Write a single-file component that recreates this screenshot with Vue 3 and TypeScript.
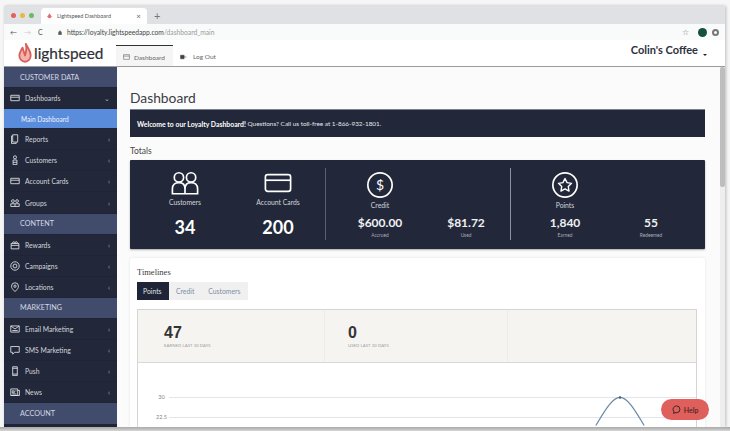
<script setup lang="ts">
type Row = { kind: 'section' | 'item' | 'active'; label: string; icon?: string; open?: boolean }
const rows: Row[] = [
  { kind: 'section', label: 'CUSTOMER DATA' },
  { kind: 'item', label: 'Dashboards', icon: 'card', open: true },
  { kind: 'active', label: 'Main Dashboard' },
  { kind: 'item', label: 'Reports', icon: 'doc' },
  { kind: 'item', label: 'Customers', icon: 'person' },
  { kind: 'item', label: 'Account Cards', icon: 'card' },
  { kind: 'item', label: 'Groups', icon: 'group' },
  { kind: 'section', label: 'CONTENT' },
  { kind: 'item', label: 'Rewards', icon: 'gift' },
  { kind: 'item', label: 'Campaigns', icon: 'target' },
  { kind: 'item', label: 'Locations', icon: 'pin' },
  { kind: 'section', label: 'MARKETING' },
  { kind: 'item', label: 'Email Marketing', icon: 'mail' },
  { kind: 'item', label: 'SMS Marketing', icon: 'chat' },
  { kind: 'item', label: 'Push', icon: 'phone' },
  { kind: 'item', label: 'News', icon: 'news' },
  { kind: 'section', label: 'ACCOUNT' },
]
const icons: Record<string, string> = {
  card: 'M1 3h11v7H1zM1 5.500h11',
  doc: 'M3.500 1h6.500v9.500H3.500zM3.500 2.500H2V12.500h6v-2',
  person: 'M4.500 3a2 2 0 1 1 4 0a2 2 0 1 1-4 0M4 6.500h5v6H4zM4 9.500h5',
  group: 'M2 4a1.800 1.800 0 1 1 3.600 0a1.800 1.800 0 1 1-3.600 0M7.400 4a1.800 1.800 0 1 1 3.600 0a1.800 1.800 0 1 1-3.600 0M1 7.500h11V11H1zM6.500 7.500V11',
  gift: 'M1.500 4.500h10v7h-10zM1.500 7h10M4 4.500c-2-3 3-3 2.500 0c-.5-3 4.500-3 2.500 0',
  target: 'M1 6.500a5.500 5.500 0 1 0 11 0a5.500 5.500 0 1 0-11 0M4 6.500a2.500 2.500 0 1 0 5 0a2.500 2.500 0 1 0-5 0',
  pin: 'M6.500 12.500C3 9 2 7.500 2 5.500a4.500 4.500 0 0 1 9 0c0 2-1 3.500-4.500 7zM5 5.500a1.500 1.500 0 1 0 3 0a1.500 1.500 0 1 0-3 0',
  mail: 'M1 2.500h11v8H1zM1 2.500l5.500 4l5.500-4M3 8.500h7',
  chat: 'M1 2h11v7.500H6L3.500 12V9.500H1z',
  phone: 'M3.500 1h6v11.500h-6zM3.500 3h6M3.500 10.500h6',
  news: 'M1 2.500h9v8.500H1zM10 4.500h2.500V11H1M3 5h2.500v2.500H3zM7 5h1.500M3 9h5.500',
}
</script>

<template>
  <div class="page">
    <div class="window">
      <div class="tabbar">
        <span class="dot red"></span><span class="dot yellow"></span><span class="dot green"></span>
        <div class="tab">
          <svg class="favicon" viewBox="0 0 10 12"><path d="M5 .5 9 6.500a4 4 0 0 1-8 0z" fill="#e0736f" /></svg>
          <span class="tab-title">Lightspeed Dashboard</span>
          <span class="tab-close">×</span>
        </div>
        <span class="new-tab">+</span>
      </div>
      <div class="addressbar">
        <span class="nav">←</span><span class="nav light">→</span><span class="nav">C</span>
        <svg class="lock" viewBox="0 0 8 9"><path d="M1 4h6v5H1zM2.500 4V2.500a1.500 1.500 0 0 1 3 0V4" fill="#555" stroke="#555" stroke-width=".7" /></svg>
        <span class="url">https://loyalty.lightspeedapp.com<span class="url-path">/dashboard_main</span></span>
        <span class="spacer"></span>
        <span class="star">☆</span>
        <span class="avatar"></span>
        <span class="ext"></span>
      </div>
      <div class="appheader">
        <div class="logo">
          <svg viewBox="0 0 16 24" class="flame"><path d="M9 1C10.500 5 14.800 9 14.800 15A6.800 7.500 0 0 1 1.200 15C1.200 11.500 3.500 8.500 5 5.500L8 15C9.500 11 10 6 9 1z" fill="#f2b5ae" stroke="#dd5e58" stroke-width="2.200" stroke-linejoin="round" /></svg>
          <span class="wordmark">lightspeed</span>
        </div>
        <div class="headtab current">
          <svg viewBox="0 0 12 10" class="headicon"><path d="M1 1h10v8H1zM1 3.500h10" fill="none" stroke="#666" /></svg>
          Dashboard
        </div>
        <div class="headtab">
          <svg viewBox="0 0 12 10" class="headicon"><path d="M1 2h6v6H1zM7 5h4" fill="#444" stroke="#444" /></svg>
          Log Out
        </div>
        <span class="spacer"></span>
        <div class="shop">Colin's Coffee<span class="caret"></span></div>
      </div>
      <div class="body">
        <nav class="sidebar">
          <div v-for="r in rows" :key="r.label" :class="['row', r.kind]">
            <svg v-if="r.icon" viewBox="0 0 13 13" class="navicon"><path :d="icons[r.icon]" /></svg>
            <span class="rowlabel">{{ r.label }}</span>
            <span v-if="r.kind === 'item'" class="chev">{{ r.open ? '⌄' : '‹' }}</span>
          </div>
        </nav>
        <main class="main">
          <h1>Dashboard</h1>
          <div class="welcome"><b>Welcome to our Loyalty Dashboard!</b> Questions? Call us toll-free at 1-866-932-1801.</div>
          <div class="totals-title">Totals</div>
          <section class="totals">
            <div class="group g1">
              <div class="stat first">
                <svg viewBox="0 0 30 26" class="sicon"><g fill="none" stroke="#fff" stroke-width="1.800"><circle cx="8.500" cy="6.500" r="5" /><circle cx="21.500" cy="6.500" r="5" /><path d="M1.500 24v-5.500c0-4 3-6.500 7-6.500s6.500 2.500 6.500 6.500V24zM15 18.500c0-4 2.500-6.500 6.500-6.500s7 2.500 7 6.500V24H15" /></g></svg>
                <span class="cap">Customers</span><strong>34</strong>
              </div>
              <div class="stat second">
                <svg viewBox="0 0 30 26" class="sicon"><g fill="none" stroke="#fff" stroke-width="1.800"><rect x="1.500" y="3.500" width="27" height="18" rx="2.500" /><path d="M1.500 9.500h27" /></g></svg>
                <span class="cap">Account Cards</span><strong>200</strong>
              </div>
            </div>
            <div class="group g2">
              <div class="head">
                <svg viewBox="0 0 30 30" class="cicon"><circle cx="15" cy="15" r="13" fill="none" stroke="#fff" stroke-width="1.800" /><text x="15" y="20.500" text-anchor="middle" class="dollar">$</text></svg>
                <span class="cap">Credit</span>
              </div>
              <div class="pair">
                <div class="mini"><strong>$600.00</strong><small>Accrued</small></div>
                <div class="mini"><strong>$81.72</strong><small>Used</small></div>
              </div>
            </div>
            <div class="group g3">
              <div class="head">
                <svg viewBox="0 0 30 30" class="cicon"><circle cx="15" cy="15" r="13" fill="none" stroke="#fff" stroke-width="1.800" /><path d="M15 8l2.200 4.500 4.800.7-3.500 3.400.8 4.900-4.300-2.300-4.300 2.300.8-4.900-3.500-3.400 4.800-.7z" fill="none" stroke="#fff" stroke-width="1.500" stroke-linejoin="round" /></svg>
                <span class="cap">Points</span>
              </div>
              <div class="pair">
                <div class="mini"><strong>1,840</strong><small>Earned</small></div>
                <div class="mini"><strong>55</strong><small>Redeemed</small></div>
              </div>
            </div>
          </section>
          <section class="timelines">
            <div class="tl-title">Timelines</div>
            <div class="tabs"><span class="tl-tab on">Points</span><span class="tl-tab">Credit</span><span class="tl-tab">Customers</span></div>
            <div class="chartbox">
              <div class="band">
                <div class="kpi"><b>47</b><small>EARNED LAST 30 DAYS</small></div>
                <div class="kpi"><b>0</b><small>USED LAST 30 DAYS</small></div>
                <div class="kpi"></div>
              </div>
              <div class="chart">
                <div class="tick t1"><span>30</span><i></i></div>
                <div class="tick t2"><span>22.5</span><i></i></div>
                <svg class="curve" viewBox="0 0 60 32"><path d="M5 32C14 17 22 3 30 3s16 14 25 29" fill="none" stroke="#6b8ba8" stroke-width="1.300" /><circle cx="30" cy="3" r="1.300" fill="#44617c" /></svg>
              </div>
            </div>
          </section>
          <button class="help">
            <svg viewBox="0 0 10 10" class="helpicon"><path d="M5 1a3.800 3.800 0 0 1 0 7.600H2.600L2 9.500V7.200A3.800 3.800 0 0 1 5 1z" fill="none" stroke="#3a2525" stroke-width="1.100" /></svg>
            Help
          </button>
        </main>
        <div class="scrollbar"><div class="thumb"></div></div>
      </div>
    </div>
  </div>
</template>

<style>
html, body { margin: 0; background: #f3f3f3; overflow: hidden; }
</style>

<style scoped>
.page { width: 730px; height: 431px; padding: 6px 5px 4px 4px; box-sizing: border-box; background: linear-gradient(#f6f6f6 0 427px, #a3a3a3 427px, #d8d8d8 431px); font-family: "Lato", "Liberation Sans", sans-serif; overflow: hidden; }
.window { height: 421px; display: flex; flex-direction: column; background: #fff; box-shadow: 1px 0 3px #bbb; }
.spacer { flex: 1; }
.tabbar { height: 18px; background: #dfe1e5; display: flex; align-items: center; padding-left: 7px; flex: none; }
.dot { width: 5px; height: 5px; border-radius: 50%; margin-right: 4px; }
.red { background: #e4605a; } .yellow { background: #e8b93f; } .green { background: #69bc5b; }
.tab { width: 106px; height: 16px; margin: 2px 0 0 3px; background: #fff; border-radius: 4px 4px 0 0; display: flex; align-items: center; padding: 0 6px; box-sizing: border-box; font-size: 5.500px; color: #555; }
.favicon { width: 5px; height: 6px; margin-right: 5px; }
.tab-title { flex: 1; }
.tab-close { font-size: 8px; color: #666; }
.new-tab { margin-left: 7px; font-size: 11px; color: #777; }
.addressbar { height: 16px; flex: none; display: flex; align-items: center; padding: 0 6px 0 6px; background: #f9fafa; font-size: 6px; color: #555; box-sizing: border-box; }
.nav { width: 14px; font-size: 7px; color: #555; }
.nav.light { color: #ccc; }
.lock { width: 4px; height: 5px; margin: 0 5px 0 6px; flex: none; }
.url { color: #444; font-size: 6.700px; }
.url-path { color: #999; }
.star { color: #777; font-size: 8px; margin-right: 9px; }
.avatar { width: 9px; height: 9px; border-radius: 50%; background: #14523f; margin-right: 5px; }
.ext { width: 7px; height: 7px; border-radius: 50%; border: 2px solid #777; box-sizing: border-box; }
.appheader { height: 27px; flex: none; display: flex; align-items: stretch; border-bottom: 1px solid #9c9c9c; box-sizing: border-box; background: #fff; padding-right: 18px; }
.logo { width: 112px; flex: none; display: flex; align-items: center; padding-left: 14px; box-sizing: border-box; }
.flame { width: 14px; height: 20px; margin-right: 2px; flex: none; }
.wordmark { font-size: 15.400px; font-family: "Lato", "Liberation Sans", sans-serif; color: #2f3238; -webkit-text-stroke: .2px #2f3238; }
.headtab { display: flex; align-items: center; font-size: 6.500px; color: #666; padding: 7px 0 0 7px; width: 54px; box-sizing: border-box; }
.headtab.current { background: #f5f5f5; border-top: 1px solid #333; width: 57px; margin-top: 5px; padding: 2px 0 0 7px; }
.headicon { width: 7px; height: 6px; margin-right: 4px; flex: none; }
.headtab:not(.current) .headicon { margin-right: 6px; }
.shop { font-size: 11px; font-weight: 700; color: #2d3140; padding-top: 3px; }
.caret { display: inline-block; width: 0; height: 0; border: 2px solid transparent; border-top-color: #222; margin-left: 5px; vertical-align: -4px; }
.body { flex: 1; min-height: 0; display: flex; position: relative; }
.sidebar { width: 113px; flex: none; background: #1f2537; display: flex; flex-direction: column; gap: 1px; overflow: hidden; }
.row { height: 20.100px; flex: none; display: flex; align-items: center; color: #d2d5dc; font-size: 6.800px; box-sizing: border-box; padding: 0 7px 0 6px; background: #222839; }
.row.section { background: #414c6c; padding-left: 16px; font-size: 7.200px; color: #d5d9e4; }
.row.active { height: 19px; background: #5a8cdc; padding-left: 17px; color: #eef3fc; font-size: 6.600px; }
.navicon { width: 10px; height: 10px; margin-right: 5px; fill: none; stroke: #e3e5ea; stroke-width: 1.100; flex: none; }
.rowlabel { flex: 1; white-space: nowrap; }
.chev { font-size: 7px; color: #aeb2bc; }
.main { flex: 1; min-width: 0; background: #fcfbfb; padding: 24px 15px 0 13px; position: relative; overflow: hidden; }
h1 { margin: 0; font-size: 13.800px; font-weight: 400; color: #3a3d44; line-height: 14px; height: 18px; }
.welcome { background: #222839; border-top: 1px solid #77808e; height: 28px; box-sizing: border-box; display: flex; align-items: center; white-space: pre-wrap; padding-left: 7px; color: #e4e6ea; font-size: 6.400px; }
.welcome b { color: #fff; font-size: 6.850px; }
.totals-title { font-size: 8.500px; color: #454545; margin-top: 9px; line-height: 11px; height: 14px; }
.totals { height: 89px; background: #222839; display: flex; border-radius: 1px; color: #fff; box-shadow: 0 1px 2px #aaa; }
.group { box-sizing: border-box; display: flex; flex-direction: column; margin: 8px 0 9px; padding-top: 3px; }
.g1 { width: 196px; flex: none; flex-direction: row; align-items: stretch; border-right: 1px solid #596075; }
.g2 { width: 185px; flex: none; border-right: 1px solid #8c92a1; padding-left: 11px; }
.g3 { flex: 1; padding-left: 11px; }
.head { width: 86px; display: flex; flex-direction: column; align-items: center; }
.stat { display: flex; flex-direction: column; align-items: center; }
.first { width: 110px; }
.second { width: 76px; }
.sicon { width: 28px; height: 25px; }
.cicon { width: 28px; height: 28px; }
.dollar { font-size: 15px; fill: #fff; font-family: "Lato", sans-serif; }
.cap { font-size: 6.800px; color: #d2d4da; line-height: 9px; margin-top: 2px; }
.stat strong { font-size: 18px; line-height: 22px; margin-top: 9px; font-weight: 700; }
.pair { display: flex; width: 172px; margin-top: 6px; }
.mini { width: 86px; flex: none; display: flex; flex-direction: column; align-items: center; }
.mini strong { font-size: 12px; line-height: 13px; font-weight: 700; color: #f0f1f3; }
.mini small { font-size: 4.800px; color: #a9adb8; line-height: 6px; margin-top: 3px; }
.timelines { margin-top: 9px; background: #fff; height: 200px; border-radius: 3px 3px 0 0; padding: 9px 8px 0 7px; box-shadow: 0 0 3px #e5e5e5; box-sizing: border-box; }
.tl-title { font-size: 8.500px; color: #3c3c3c; line-height: 10px; height: 15px; font-family: "Liberation Serif", serif; }
.tabs { display: flex; width: 111px; background: #f0f0f0; height: 18px; }
.tl-tab { font-size: 6.800px; color: #7c8ea7; display: flex; align-items: center; padding: 0 7px; }
.tl-tab.on { background: #1f2537; color: #dfe3ea; width: 32px; box-sizing: border-box; padding: 0 6px; }
.chartbox { margin-top: 9px; border: 1px solid #d5d5d1; height: 130px; box-sizing: border-box; }
.band { height: 53px; background: #f6f4f1; border-bottom: 1px solid #d8d8d8; display: flex; box-sizing: border-box; }
.kpi { width: 187px; padding: 15px 0 0 26px; box-sizing: border-box; border-right: 1px solid #ecebe7; display: flex; flex-direction: column; }
.kpi + .kpi { width: 183px; padding-left: 23px; }
.kpi:last-child { border: 0; flex: 1; }
.kpi b { font-size: 16px; line-height: 15px; color: #333; font-family: "Liberation Sans", sans-serif; }
.kpi small { font-size: 4.200px; color: #999; margin-top: 3px; letter-spacing: .1px; }
.chart { position: relative; flex: 1; }
.tick { position: absolute; left: 16px; right: 0; display: flex; align-items: center; font-size: 5.500px; color: #888; }
.tick span { width: 15px; text-align: center; }
.tick i { flex: 1; height: 1px; background: #e3e5e8; }
.t1 { top: 31px; } .t2 { top: 51px; }
.curve { position: absolute; left: 453px; top: 31px; width: 58px; height: 32px; }
.help { position: absolute; right: 11px; bottom: 7px; width: 48px; height: 21px; border: 0; border-radius: 11px; background: #df5f5c; display: flex; align-items: center; justify-content: center; gap: 3px; font: 700 7px "Lato", sans-serif; color: #5a2a2a; padding: 0; }
.helpicon { width: 9px; height: 9px; }
.scrollbar { width: 5px; flex: none; background: #eee; }
.thumb { height: 120px; background: #bdbdbd; border-radius: 2px; }
</style>
